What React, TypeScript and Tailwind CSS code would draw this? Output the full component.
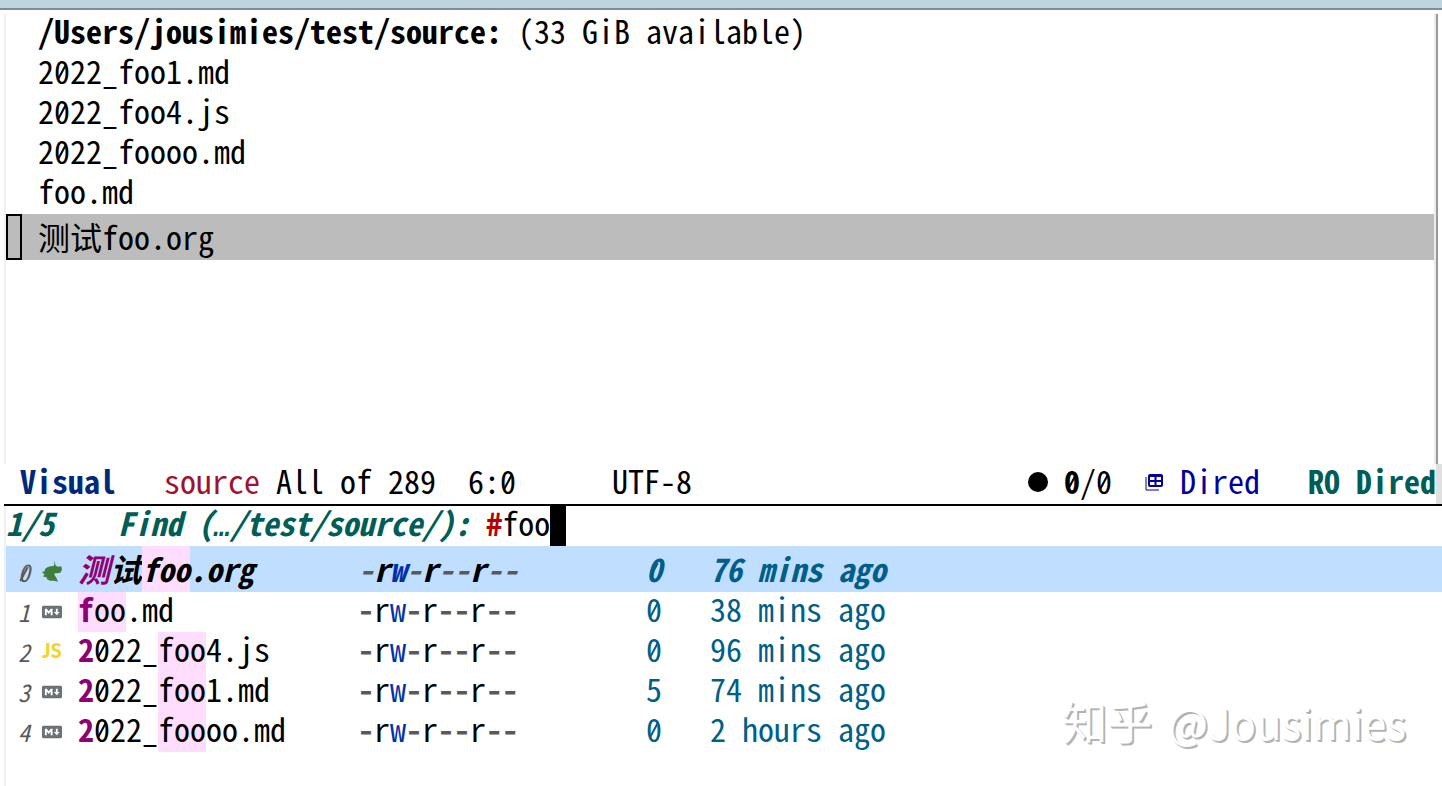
import { FaMarkdown } from 'react-icons/fa';

const files = ['2022_foo1.md', '2022_foo4.js', '2022_foooo.md', 'foo.md'];

// "lead" is the first character, "hit" the part matched by the query
const candidates = [
  { icon: 'org', lead: '测', before: '试', hit: 'foo', after: '.org', size: 0, age: '76 mins ago' },
  { icon: 'md', lead: 'f', before: '', hit: 'oo', after: '.md', size: 0, age: '38 mins ago' },
  { icon: 'js', lead: '2', before: '022_', hit: 'foo', after: '4.js', size: 0, age: '96 mins ago' },
  { icon: 'md', lead: '2', before: '022_', hit: 'foo', after: '1.md', size: 5, age: '74 mins ago' },
  { icon: 'md', lead: '2', before: '022_', hit: 'foo', after: 'oo.md', size: 0, age: '2 hours ago' },
];

// Draws every zero with a slash through it
function Mono({ children }: { children: string | number }) {
  return (
    <>
      {String(children).split(/(0)/).map((part, i) =>
        part === '0' ? (
          <span
            key={i}
            className="relative after:absolute after:inset-x-0 after:top-1 after:bottom-0 after:m-auto after:w-0.5 after:h-4 after:rotate-[28deg] after:bg-current"
          >
            0
          </span>
        ) : (
          part
        )
      )}
    </>
  );
}

function OrgIcon() {
  return (
    <svg viewBox="18 17 60 66" className="w-5 h-[22px]" fill="#3f7f3a">
      <path d="M53 18 L57 28 L60 35 L68 37 L76 36 L78 46 L73 55 L62 57 L55 57 L56 63 L61 70 L66 82 L54 79 L42 79 L32 74 L34 70 L20 66 L26 61 L18 53 L27 50 L26 45 L34 39 L44 36 L53 35 L55 31 Z" />
    </svg>
  );
}

function FileIcon({ type }: { type: string }) {
  if (type === 'org') return <OrgIcon />;
  if (type === 'js') {
    return <span className="block pb-1 font-['Lato'] text-[20px] leading-5 font-black text-[#f5d32b]">JS</span>;
  }
  return <FaMarkdown size={20} color="#6a7276" />;
}

function DiredIcon() {
  return (
    <svg viewBox="0 0 20 20" className="w-5 h-5" fill="none" stroke="#00009c" strokeWidth="2">
      <rect x="5" y="3" width="13" height="11" rx="1" />
      <path d="M5 4h13M5 9h13M11.5 4v10" />
      <path d="M2 5v13h13" strokeWidth="1" />
    </svg>
  );
}

function Permissions() {
  return (
    <>
      {'-rw-r--r--'.split('').map((c, i) => (
        <span key={i} className={c === '-' ? 'font-bold text-[#595959]' : c === 'w' ? 'text-[#0031a9]' : ''}>
          {c}
        </span>
      ))}
    </>
  );
}

export default function App() {
  return (
    <div className="relative flex flex-col min-h-screen bg-white text-black font-['Noto_Sans_Mono_CJK_SC','Liberation_Mono','Noto_Sans_CJK_SC',monospace] text-[32px] leading-8 whitespace-pre overflow-hidden">
      <header className="h-[10px] bg-[#c0d3e0] border-b-2 border-[#7d8c98] mb-1" />

      {/* Dired buffer */}
      <main className="flex mx-1 h-[450px]">
        <div className="flex-1 border-l-2 border-[#f0f0f0]">
          <div className="pl-8 pb-2">
            <b>/Users/jousimies/test/source:</b> (33 GiB available)
          </div>
          <ul>
            {files.map((name) => (
              <li key={name} className="pl-8 pb-2"><Mono>{name}</Mono></li>
            ))}
            <li className="flex gap-4 bg-[#bcbcbc]">
              <span className="w-4 border-2 border-black" />
              <span className="pt-1.5 pb-2">测试foo.org</span>
            </li>
          </ul>
        </div>
        <div className="w-1 border-l-2 border-l-[#ebebeb] border-r-2 border-r-[#999999]" />
      </main>

      {/* Mode line */}
      <div className="flex ml-1 h-[42px] border-b-2 border-black">
        <div className="flex flex-1 justify-between pl-4">
          <div className="flex">
            <b className="text-[#00297a] mr-12">Visual</b>
            <span className="text-[#a0132f] mr-4">source</span>
            <span className="mr-8">All of 289</span>
            <span className="mr-24"><Mono>6:0</Mono></span>
            <span>UTF-8</span>
          </div>
          <div className="flex">
            <span className="size-5 mt-2 mr-4 rounded-full bg-black" />
            <span className="mr-8"><b><Mono>0</Mono></b><Mono>/0</Mono></span>
            <span className="mt-2 mr-4"><DiredIcon /></span>
            <span className="mr-12 text-[#00009c]">Dired</span>
            <b className="text-[#005e57]">RO Dired</b>
          </div>
        </div>
        <div className="w-[6px] bg-[#e0e0e0]" />
      </div>

      {/* Minibuffer */}
      <div className="flex-1 ml-1 border-l-2 border-[#f0f0f0]">
        <div className="flex h-10">
          <span className="w-28 font-bold italic text-[#005e57]">1/5</span>
          <label htmlFor="query" className="font-bold italic text-[#005e57]">
            Find (<span className="font-['Liberation_Mono'] text-[27px] leading-6">…</span>/test/source/):{' '}
          </label>
          <b className="text-[#b60000]">#</b>
          <input id="query" defaultValue="foo" className="w-12 h-8 outline-none" />
          <span className="w-4 bg-black" />
        </div>
        <table className="w-full table-fixed text-left">
          <tbody>
            {candidates.map((c, i) => {
              const pad = i === 0 ? 'pt-1.5 pb-2' : 'pb-2';
              return (
                <tr key={i} className={i === 0 ? 'bg-[#c0deff] font-bold italic' : ''}>
                  <td className={`w-9 pl-3 align-top text-[24px] italic font-normal text-[#595959] ${i === 0 ? 'pt-2.5' : 'pt-1'}`}>
                    <Mono>{i}</Mono>
                  </td>
                  <td className={`w-9 align-middle ${i === 0 ? 'pt-1' : ''}`}><FileIcon type={c.icon} /></td>
                  <td className="w-70">
                    <div className="flex">
                      <b className={`text-[#8f0075] ${pad} ${c.lead === 'f' ? 'bg-[#ffddff]' : ''}`}>{c.lead}</b>
                      <span className={pad}><Mono>{c.before}</Mono></span>
                      <span className={`bg-[#ffddff] ${pad}`}>{c.hit}</span>
                      <span className={pad}>{c.after}</span>
                    </div>
                  </td>
                  <td className={`w-72 ${pad}`}><Permissions /></td>
                  <td className={`w-16 text-[#005f88] ${pad}`}><Mono>{c.size}</Mono></td>
                  <td className={`text-[#005f88] ${pad}`}>{c.age}</td>
                </tr>
              );
            })}
          </tbody>
        </table>
      </div>

      <div className="absolute right-9 bottom-9 flex items-baseline gap-4 font-['Noto_Sans_CJK_SC',sans-serif] text-[45px] leading-[56px] text-white [text-shadow:1px_1px_0_#b3b3b3,2px_2px_0_#b3b3b3]">
        <span>知乎</span>
        <span className="text-[42px]">@Jousimies</span>
      </div>
    </div>
  );
}
